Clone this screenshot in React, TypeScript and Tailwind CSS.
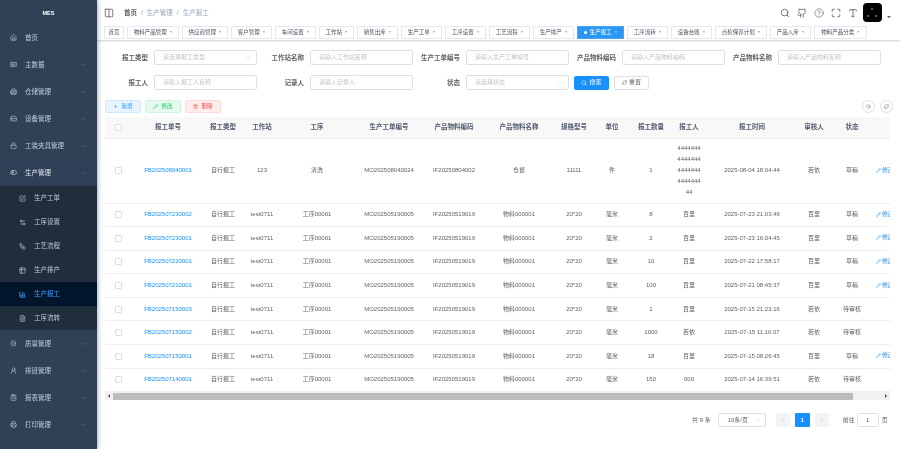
import {
  BarChart3,
  Building2,
  ChevronDown,
  ChevronLeft,
  ChevronRight,
  ChevronUp,
  ClipboardList,
  Columns2,
  FileText,
  Github,
  HardDrive,
  HelpCircle,
  House,
  IdCard,
  Lock,
  Maximize,
  Pencil,
  Plus,
  Printer,
  RefreshCw,
  Search,
  SearchCheck,
  Settings2,
  SquarePen,
  Table2,
  ToggleLeft,
  Trash2,
  UserRound,
  Workflow,
  Type,
} from 'lucide-react';

const topMenus = [
  { name: '首页', icon: House, arrow: false },
  { name: '主数据', icon: IdCard, arrow: true },
  { name: '仓储管理', icon: Building2, arrow: true },
  { name: '设备管理', icon: HardDrive, arrow: true },
  { name: '工装夹具管理', icon: Lock, arrow: true },
];

const subMenus = [
  { name: '生产工单', icon: SquarePen },
  { name: '工序设置', icon: Settings2 },
  { name: '工艺流程', icon: Workflow },
  { name: '生产排产', icon: Table2 },
  { name: '生产报工', icon: BarChart3, active: true },
  { name: '工序流转', icon: FileText },
];

const bottomMenus = [
  { name: '质量管理', icon: SearchCheck },
  { name: '排班管理', icon: UserRound },
  { name: '报表管理', icon: ClipboardList },
  { name: '打印管理', icon: Printer },
];

const tabs = [
  { name: '首页', w: 'w-[20px]', plain: true },
  { name: '物料产品管理', w: 'w-[52px]' },
  { name: '供应商管理', w: 'w-[46px]' },
  { name: '客户管理', w: 'w-[41px]' },
  { name: '车间设置', w: 'w-[41px]' },
  { name: '工作站', w: 'w-[35px]' },
  { name: '销售出库', w: 'w-[41px]' },
  { name: '生产工单', w: 'w-[41px]' },
  { name: '工序设置', w: 'w-[41px]' },
  { name: '工艺流程', w: 'w-[41px]' },
  { name: '生产排产', w: 'w-[41px]' },
  { name: '生产报工', w: 'w-[47px]', active: true },
  { name: '工序流转', w: 'w-[41px]' },
  { name: '设备台账', w: 'w-[41px]' },
  { name: '点检保养计划', w: 'w-[52px]' },
  { name: '产品入库', w: 'w-[41px]' },
  { name: '物料产品分类', w: 'w-[53px]' },
];

const columns = [
  { title: '', w: 'w-[26px]' },
  { title: '报工单号', w: 'w-[74px]' },
  { title: '报工类型', w: 'w-[36px]' },
  { title: '工作站', w: 'w-[42px]' },
  { title: '工序', w: 'w-[68px]' },
  { title: '生产工单编号', w: 'w-[76px]' },
  { title: '产品物料编码', w: 'w-[54px]' },
  { title: '产品物料名称', w: 'w-[76px]' },
  { title: '规格型号', w: 'w-[34px]' },
  { title: '单位', w: 'w-[42px]' },
  { title: '报工数量', w: 'w-[36px]' },
  { title: '报工人', w: 'w-[40px]' },
  { title: '报工时间', w: 'w-[86px]' },
  { title: '审核人', w: 'w-[38px]' },
  { title: '状态', w: 'w-[38px]' },
  { title: '', w: 'w-[19px]' },
];

const rows = [
  ['FB202508040001', '123', '清洗', 'MO202508040024', 'IF20250804002', '仓鼠', '11111', '件', '1', '4444444444444444444444444444 44', '2025-08-04 18:04:44', '若依', '草稿', true],
  ['FB202507230002', 'test0711', '工序00001', 'MO202505190005', 'IF20250519019', '物料000001', '20*20', '毫米', '8', '百里', '2025-07-23 21:03:46', '百里', '草稿', true],
  ['FB202507230001', 'test0711', '工序00001', 'MO202505190005', 'IF20250519019', '物料000001', '20*20', '毫米', '2', '百里', '2025-07-23 16:04:45', '百里', '草稿', true],
  ['FB202507220001', 'test0711', '工序00001', 'MO202505190005', 'IF20250519019', '物料000001', '20*20', '毫米', '10', '百里', '2025-07-22 17:58:17', '百里', '草稿', true],
  ['FB202507210001', 'test0711', '工序00001', 'MO202505190005', 'IF20250519019', '物料000001', '20*20', '毫米', '100', '百里', '2025-07-21 08:45:37', '百里', '草稿', true],
  ['FB202507150003', 'test0711', '工序00001', 'MO202505190005', 'IF20250519019', '物料000001', '20*20', '毫米', '1', '百里', '2025-07-15 21:23:16', '若依', '待审核', false],
  ['FB202507150002', 'test0711', '工序00001', 'MO202505190005', 'IF20250519019', '物料000001', '20*20', '毫米', '1000', '若依', '2025-07-15 11:16:07', '若依', '待审核', false],
  ['FB202507150001', 'test0711', '工序00001', 'MO202505190005', 'IF20250519019', '物料000001', '20*20', '毫米', '18', '百里', '2025-07-15 08:26:45', '百里', '草稿', true],
  ['FB202507140001', 'test0711', '工序00001', 'MO202505190005', 'IF20250519019', '物料000001', '20*20', '毫米', '150', '000', '2025-07-14 16:39:51', '若依', '待审核', false],
] as const;

const Field = ({ label, placeholder, select }: { label: string; placeholder: string; select?: boolean }) => (
  <div className="flex items-center">
    <label className="w-[44px] shrink-0 whitespace-nowrap text-right text-[6.5px] font-semibold text-[#606266]">{label}</label>
    <div className="ml-[6px] flex h-[15px] w-[103px] items-center justify-between rounded-[2px] border border-[#dcdfe6] bg-white pl-[8px] pr-[4px] text-[6px] text-[#c0c4cc]">
      <span>{placeholder}</span>
      {select && <ChevronDown size={7} strokeWidth={1.5} />}
    </div>
  </div>
);

const App = () => {
  return (
    <div className="flex h-screen w-full overflow-hidden bg-white font-['Liberation_Sans','Noto_Sans_CJK_SC',sans-serif] blur-[0.45px]">
      {/* Sidebar */}
      <aside className="z-10 w-[97px] shrink-0 bg-[#304156] text-[6.5px] text-[#bfcbd9] shadow-[1px_0_4px_rgba(0,21,41,0.35)]">
        <div className="flex h-[24px] items-center justify-center pt-[2px] text-[5.5px] font-semibold text-white">MES</div>
        {topMenus.map((m) => (
          <div key={m.name} className="flex h-[27px] items-center pl-[10px] pr-[11px]">
            <m.icon size={7} strokeWidth={2} className="mr-[8px]" />
            <span className="flex-1">{m.name}</span>
            {m.arrow && <ChevronDown size={6} strokeWidth={1.5} className="text-[#8493a6]" />}
          </div>
        ))}
        <div className="flex h-[27px] items-center bg-[#2f3f56] pl-[10px] pr-[11px] text-[#e4eaf1]">
          <ToggleLeft size={7} strokeWidth={2} className="mr-[8px]" />
          <span className="flex-1">生产管理</span>
          <ChevronUp size={6} strokeWidth={1.5} className="text-[#8493a6]" />
        </div>
        <div className="bg-[#1f2d3d]">
          {subMenus.map((m) => (
            <div
              key={m.name}
              className={`flex h-[24px] items-center pl-[19px] ${m.active ? 'bg-[#02162b] text-[#409eff]' : ''}`}
            >
              <m.icon size={7} strokeWidth={m.active ? 3 : 2} className="mr-[8px]" />
              <span>{m.name}</span>
            </div>
          ))}
        </div>
        {bottomMenus.map((m) => (
          <div key={m.name} className="flex h-[27px] items-center pl-[10px] pr-[11px]">
            <m.icon size={7} strokeWidth={2} className="mr-[8px]" />
            <span className="flex-1">{m.name}</span>
            <ChevronDown size={6} strokeWidth={1.5} className="text-[#8493a6]" />
          </div>
        ))}
      </aside>

      <main className="flex min-w-0 flex-1 flex-col">
        {/* Navbar */}
        <div className="flex h-[25px] shrink-0 items-center pl-[7px] pr-[9px]">
          <Columns2 size={10} strokeWidth={1.5} className="text-[#303133]" />
          <div className="ml-[10px] flex flex-1 items-center gap-[4px] text-[6.5px] text-[#97a8be]">
            <span className="font-semibold text-[#606266]">首页</span>
            <span>/</span>
            <span>生产管理</span>
            <span>/</span>
            <span>生产报工</span>
          </div>
          <div className="flex items-center gap-[7px] text-[#5a5e66]">
            <Search size={10} strokeWidth={2} />
            <Github size={10} strokeWidth={2} />
            <HelpCircle size={10} strokeWidth={1.5} />
            <Maximize size={10} strokeWidth={2} />
            <Type size={10} strokeWidth={2} />
          </div>
          <div className="relative ml-[5px] h-[19px] w-[19px] rounded-[4px] bg-black">
            <span className="absolute left-[8px] top-[5px] h-[2px] w-[2px] rounded-full bg-[#2b8c9a]" />
            <span className="absolute left-[4px] top-[12px] h-[2px] w-[2px] rounded-full bg-[#2b8c9a]" />
            <span className="absolute left-[12px] top-[12px] h-[2px] w-[2px] rounded-full bg-[#2b8c9a]" />
          </div>
          <span className="ml-[5px] mt-[8px] h-0 w-0 border-x-[2px] border-t-[2px] border-x-transparent border-t-[#5a5e66]" />
        </div>

        {/* Tags */}
        <div className="flex h-[16px] shrink-0 items-center gap-[3px] border-b border-[#d8dce5] pb-[1px] pl-[7px] shadow-[0_1px_2px_rgba(0,0,0,0.08)]">
          {tabs.map((t) => (
            <div
              key={t.name}
              className={`flex h-[13px] items-center justify-center gap-[3px] border text-[5.5px] ${t.w} ${
                t.active ? 'border-[#42a5f5] bg-[#2b96f3] text-white' : 'border-[#e4e7ed] bg-white text-[#495060]'
              }`}
            >
              {t.active && <span className="h-[3px] w-[3px] rounded-full bg-white" />}
              <span>{t.name}</span>
              {!t.plain && <span className="text-[4px] leading-none">×</span>}
            </div>
          ))}
        </div>

        {/* Search form */}
        <div className="pl-[7px] pt-[9px]">
          <div className="flex gap-[3px]">
            <Field label="报工类型" placeholder="请选择报工类型" select />
            <Field label="工作站名称" placeholder="请输入工作站名称" />
            <Field label="生产工单编号" placeholder="请输入生产工单编号" />
            <Field label="产品物料编码" placeholder="请输入产品物料编码" />
            <Field label="产品物料名称" placeholder="请输入产品物料名称" />
          </div>
          <div className="mt-[10px] flex items-center gap-[3px]">
            <Field label="报工人" placeholder="请输入报工人名称" />
            <Field label="记录人" placeholder="请输入记录人" />
            <Field label="状态" placeholder="请选择状态" select />
            <button className="ml-[2px] flex h-[14px] w-[35px] items-center justify-center gap-[2px] rounded-[2px] bg-[#1890ff] text-[6px] text-white">
              <Search size={6} />
              搜索
            </button>
            <button className="ml-[2px] flex h-[14px] w-[35px] items-center justify-center gap-[2px] rounded-[2px] border border-[#dcdfe6] bg-white text-[6px] text-[#606266]">
              <RefreshCw size={5} />
              重置
            </button>
          </div>
        </div>

        {/* Toolbar */}
        <div className="mt-[10px] flex h-[13px] items-center pl-[8px] pr-[7px]">
          <button className="flex h-[13px] w-[36px] items-center justify-center gap-[3px] rounded-[2px] border border-[#d1e9ff] bg-[#e8f4ff] text-[5.5px] text-[#1890ff]">
            <Plus size={5} />
            新增
          </button>
          <button className="ml-[4px] flex h-[13px] w-[36px] items-center justify-center gap-[3px] rounded-[2px] border border-[#d0f5e0] bg-[#e7faf0] text-[5.5px] text-[#13ce66]">
            <Pencil size={5} />
            修改
          </button>
          <button className="ml-[4px] flex h-[13px] w-[36px] items-center justify-center gap-[3px] rounded-[2px] border border-[#ffdbdb] bg-[#ffeded] text-[5.5px] text-[#ff4949]">
            <Trash2 size={5} />
            删除
          </button>
          <div className="ml-auto flex gap-[5px]">
            <span className="flex h-[13px] w-[13px] items-center justify-center rounded-full border border-[#dcdfe6] text-[#606266]">
              <Search size={5} />
            </span>
            <span className="flex h-[13px] w-[13px] items-center justify-center rounded-full border border-[#dcdfe6] text-[#606266]">
              <RefreshCw size={5} />
            </span>
          </div>
        </div>

        {/* Table */}
        <div className="ml-[8px] mt-[4px] w-[785px] overflow-hidden">
          <table className="w-[785px] table-fixed border-collapse text-center text-[6px] text-[#606266]">
            <colgroup>
              {columns.map((c, i) => (
                <col key={i} className={c.w} />
              ))}
            </colgroup>
            <thead>
              <tr className="h-[21px] border-b border-[#ebeef5] bg-[#f8f8f9] text-[6.5px] font-semibold text-[#515a6e]">
                {columns.map((c, i) => (
                  <th key={i} className="whitespace-nowrap font-semibold">
                    {i === 0 ? <span className="mx-auto block h-[7px] w-[7px] rounded-[1px] border border-[#dcdfe6] bg-white" /> : c.title}
                  </th>
                ))}
              </tr>
            </thead>
            <tbody>
              {rows.map((r, i) => (
                <tr key={r[0]} className={`border-b border-[#ebeef5] ${i === 0 ? 'h-[65px]' : 'h-[23.6px]'}`}>
                  <td>
                    <span className="mx-auto block h-[7px] w-[7px] rounded-[1px] border border-[#dcdfe6] bg-white" />
                  </td>
                  <td className="whitespace-nowrap text-[#1890ff]">{r[0]}</td>
                  <td className="whitespace-nowrap">自行报工</td>
                  {r.slice(1, 9).map((v, j) => (
                    <td key={j} className="whitespace-nowrap">{v}</td>
                  ))}
                  <td className="break-all px-[7px] leading-[11px]">{r[9]}</td>
                  <td className="whitespace-nowrap">{r[10]}</td>
                  <td className="whitespace-nowrap">{r[11]}</td>
                  <td className="whitespace-nowrap">{r[12]}</td>
                  <td className="overflow-hidden whitespace-nowrap pl-[5px] text-left text-[#1890ff]">
                    {r[13] && (
                      <span className="inline-flex items-center gap-[1px]">
                        <Pencil size={5} />
                        修改
                      </span>
                    )}
                  </td>
                </tr>
              ))}
            </tbody>
          </table>
          {/* scrollbar */}
          <div className="flex h-[8px] items-center bg-[#f1f1f1]">
            <span className="flex w-[8px] justify-center text-[#505050]">
              <span className="h-0 w-0 border-y-[2px] border-r-[2px] border-y-transparent border-r-current" />
            </span>
            <span className="h-[7px] w-[740px] bg-[#bcbcbc]" />
            <span className="ml-auto flex w-[8px] justify-center text-[#505050]">
              <span className="h-0 w-0 border-y-[2px] border-l-[2px] border-y-transparent border-l-current" />
            </span>
          </div>
        </div>

        {/* Pagination */}
        <div className="ml-[595px] mt-[13px] flex h-[14px] items-center text-[6px] text-[#606266]">
          <span className="whitespace-nowrap">共 9 条</span>
          <div className="ml-[7px] flex h-[14px] w-[48px] items-center justify-between rounded-[2px] border border-[#dcdfe6] pl-[9px] pr-[3px]">
            <span className="whitespace-nowrap">10条/页</span>
            <ChevronDown size={6} strokeWidth={1.5} className="text-[#c0c4cc]" />
          </div>
          <span className="ml-[10px] flex h-[14px] w-[14px] items-center justify-center rounded-[1px] bg-[#f4f4f5] text-[#c0c4cc]">
            <ChevronLeft size={6} />
          </span>
          <span className="ml-[5px] flex h-[14px] w-[15px] items-center justify-center rounded-[1px] bg-[#1890ff] font-bold text-white">1</span>
          <span className="ml-[5px] flex h-[14px] w-[14px] items-center justify-center rounded-[1px] bg-[#f4f4f5] text-[#c0c4cc]">
            <ChevronRight size={6} />
          </span>
          <span className="ml-[14px] whitespace-nowrap">前往</span>
          <span className="ml-[2px] flex h-[14px] w-[22px] items-center justify-center rounded-[2px] border border-[#dcdfe6]">1</span>
          <span className="ml-[3px]">页</span>
        </div>
      </main>
    </div>
  );
};

export default App;
